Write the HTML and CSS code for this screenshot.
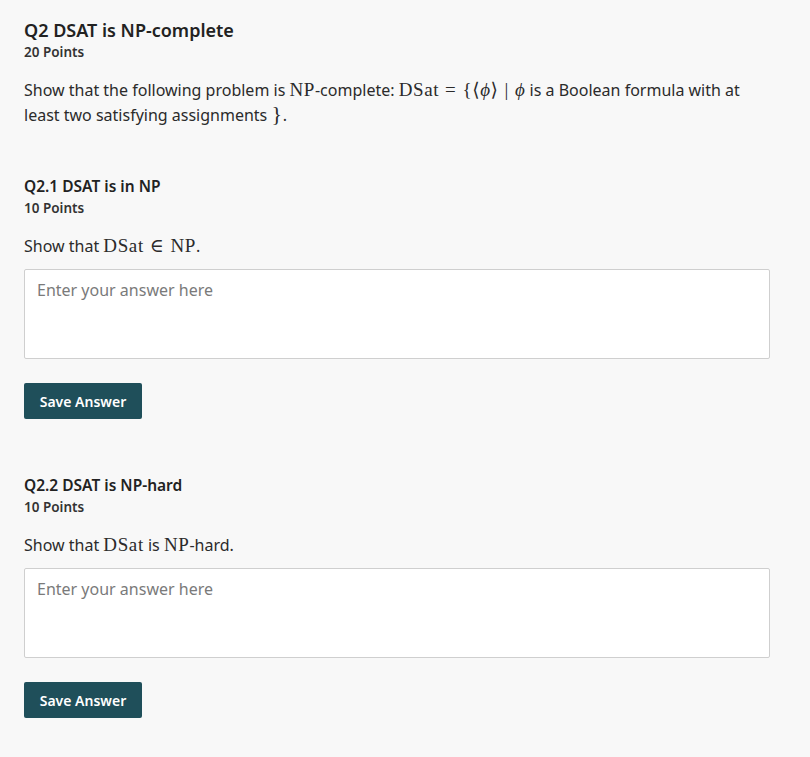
FILE: index.html
```html
<!DOCTYPE html>
<html lang="en">

<head>
    <meta charset="UTF-8">
    <meta name="viewport" content="width=device-width, initial-scale=1.0">
    <title>Q2 DSAT is NP-complete</title>
    <link rel="stylesheet" href="styles.css">
</head>

<body>
    <div class="question">
        <h1 class="q-title">Q2 DSAT is NP-complete</h1>
        <div class="q-points">20 Points</div>
        <p class="q-text">
            Show that the following problem is <span class="m">NP</span>-complete:
            <span class="m">DSat<span class="op">=</span>{⟨<i>ϕ</i>⟩<span class="op">|</span><i>ϕ</i></span>
            is a Boolean formula with at least two satisfying assignments <span class="m big">}</span>.
        </p>

        <div class="part">
            <h2 class="p-title">Q2.1 DSAT is in NP</h2>
            <div class="q-points">10 Points</div>
            <p class="q-text">Show that <span class="m">DSat<span class="op">∈</span>NP</span>.</p>
            <textarea class="answer" placeholder="Enter your answer here"></textarea>
            <button class="save">Save Answer</button>
        </div>

        <div class="part">
            <h2 class="p-title">Q2.2 DSAT is NP-hard</h2>
            <div class="q-points">10 Points</div>
            <p class="q-text">Show that <span class="m">DSat</span> is <span class="m">NP</span>-hard.</p>
            <textarea class="answer" placeholder="Enter your answer here"></textarea>
            <button class="save">Save Answer</button>
        </div>
    </div>
</body>

</html>
```

FILE: styles.css
```css
* {
    margin: 0;
    padding: 0;
    box-sizing: border-box;
}

body {
    background-color: #f8f8f8;
    font-family: "Noto Sans", "Open Sans", sans-serif;
    color: #2b2b2b;
}

.question {
    padding: 18px 40px 40px 24px;
}

.q-title {
    font-size: 18px;
    font-weight: 600;
    line-height: 24px;
    color: #222;
}

.q-points {
    font-size: 13.5px;
    font-weight: 600;
    line-height: 18px;
    margin-top: 1px;
    color: #333;
}

.q-text {
    font-size: 16px;
    line-height: 25px;
    margin-top: 17px;
    padding-right: 20px;
}

/* 数学公式 */
.m {
    font-family: "Liberation Serif", "DejaVu Serif", serif;
    font-size: 19px;
    line-height: 1;
    letter-spacing: 0.6px;
}

.m .op {
    margin: 0 6px;
}

.m.big {
    font-size: 22px;
}

.part {
    margin-top: 47px;
}

.part + .part {
    margin-top: 55px;
}

.p-title {
    font-size: 15.5px;
    font-weight: 600;
    line-height: 22px;
    color: #222;
}

.part .q-points {
    margin-top: 2px;
}

.part .q-text {
    margin-top: 17px;
}

.answer {
    display: block;
    width: 746px;
    height: 90px;
    margin-top: 10px;
    padding: 8px 12px;
    border: 1px solid #cfcfcf;
    border-radius: 2px;
    background-color: #fff;
    font-family: "Noto Sans", sans-serif;
    font-size: 16px;
    line-height: 24px;
    resize: none;
}

.answer::placeholder {
    color: #7a7a7a;
}

.save {
    display: block;
    width: 118px;
    height: 36px;
    margin-top: 24px;
    border: none;
    border-radius: 2px;
    background-color: #1f4f5a;
    color: #fff;
    font-family: "Noto Sans", sans-serif;
    font-size: 14px;
    font-weight: 600;
    cursor: pointer;
}
```
